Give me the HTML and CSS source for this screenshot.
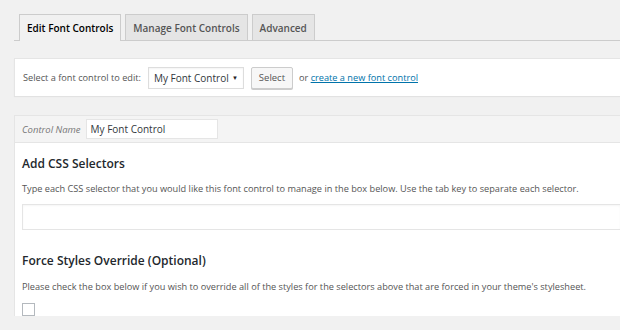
FILE: index.html
```html
<!DOCTYPE html>
<html>
<head>
<meta charset="utf-8">
<link rel="stylesheet" href="styles.css">
</head>
<body>
<div class="wrap">
  <nav class="tabs">
    <a class="tab active">Edit Font Controls</a>
    <a class="tab">Manage Font Controls</a>
    <a class="tab">Advanced</a>
  </nav>
  <div class="select-box">
    <span class="label">Select a font control to edit:</span>
    <span class="dropdown">My Font Control <span class="caret">▼</span></span>
    <span class="button">Select</span>
    <span class="or">or <a class="link">create a new font control</a></span>
  </div>
  <div class="panel">
    <div class="panel-head">
      <span class="cn-label">Control Name</span>
      <span class="cn-input">My Font Control</span>
    </div>
    <div class="panel-body">
      <h3 class="heading">Add CSS Selectors</h3>
      <p class="desc">Type each CSS selector that you would like this font control to manage in the box below. Use the tab key to separate each selector.</p>
      <div class="textarea"></div>
      <h3 class="heading second">Force Styles Override (Optional)</h3>
      <p class="desc desc2">Please check the box below if you wish to override all of the styles for the selectors above that are forced in your theme's stylesheet.</p>
      <span class="checkbox"></span>
    </div>
  </div>
</div>
</body>
</html>
```
FILE: styles.css
```css
html, body {
  margin: 0;
  padding: 0;
  background: #f1f1f1;
  overflow: hidden;
}
body {
  width: 620px;
  height: 330px;
  font-family: "Open Sans", "Noto Sans", sans-serif;
  color: #555;
}
.wrap {
  padding: 14px 0 0 14px;
}
.tabs {
  display: flex;
  gap: 4px;
  padding-left: 5px;
  border-bottom: 1px solid #ccc;
  height: 26px;
}
.tab {
  display: flex;
  align-items: center;
  padding: 0 7px;
  height: 25px;
  border: 1px solid #ccc;
  border-bottom: none;
  background: #e5e5e5;
  font-size: 10px;
  font-weight: 600;
  color: #555;
  white-space: nowrap;
}
.tab.active {
  background: #f1f1f1;
  color: #000;
  height: 26px;
}
.select-box {
  margin-top: 17px;
  background: #fff;
  height: 37px;
  display: flex;
  align-items: center;
  padding-left: 8px;
  border-top: 1px solid #e5e5e5;
  border-left: 1px solid #e5e5e5;
  box-shadow: 0 1px 1px rgba(0,0,0,0.06);
  font-size: 9.2px;
  white-space: nowrap;
}
.label {
  margin-right: 7px;
}
.dropdown {
  display: flex;
  align-items: center;
  justify-content: space-between;
  width: 84px;
  height: 20px;
  padding: 0 5px 0 5px;
  border: 1px solid #ddd;
  background: #fff;
  font-size: 10px;
  color: #32373c;
  white-space: nowrap;
  box-shadow: inset 0 1px 2px rgba(0,0,0,0.05);
}
.caret {
  font-size: 6px;
  color: #222;
}
.button {
  display: flex;
  align-items: center;
  justify-content: center;
  width: 40px;
  height: 20px;
  margin-left: 7px;
  border: 1px solid #ccc;
  background: #f7f7f7;
  border-radius: 2px;
  box-shadow: 0 1px 0 #ccc;
  font-size: 9.5px;
  color: #555;
}
.or {
  margin-left: 6px;
}
.link {
  color: #0073aa;
  text-decoration: underline;
}
.panel {
  margin-top: 19px;
  background: #fff;
  border-top: 1px solid #e5e5e5;
  border-left: 1px solid #e5e5e5;
}
.panel-head {
  background: #f4f4f4;
  height: 26px;
  display: flex;
  align-items: center;
  padding-left: 7px;
  border-bottom: 1px solid #e5e5e5;
}
.cn-label {
  font-style: italic;
  font-size: 9.5px;
  color: #777;
  margin-right: 5px;
}
.cn-input {
  display: flex;
  align-items: center;
  width: 126px;
  height: 18px;
  padding-left: 4px;
  background: #fff;
  border: 1px solid #e5e5e5;
  font-size: 10px;
  color: #32373c;
}
.panel-body {
  padding: 11px 0 0 7px;
}
.heading {
  margin: 0;
  font-size: 12px;
  font-weight: 600;
  color: #23282d;
  line-height: 20px;
}
.heading.second {
  margin-top: 21px;
}
.desc {
  margin: 8px 0 0;
  font-size: 9.2px;
  line-height: 14px;
}
.desc2 {
  margin-top: 9px;
}
.textarea {
  margin-top: 8px;
  height: 24px;
  border: 1px solid #e5e5e5;
  border-right: none;
  box-shadow: inset 0 1px 2px rgba(0,0,0,0.04);
}
.checkbox {
  display: block;
  margin-top: 9px;
  width: 11px;
  height: 11px;
  border: 1px solid #b4b9be;
  background: #fff;
}
```
